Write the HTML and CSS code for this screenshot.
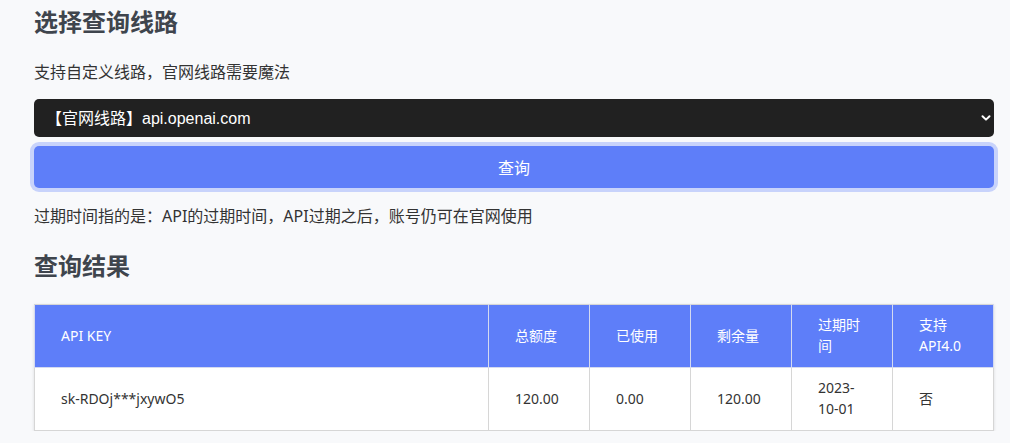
FILE: index.html
```html
<!DOCTYPE html>
<html lang="zh-CN">
<head>
    <meta charset="UTF-8">
    <meta name="viewport" content="width=device-width, initial-scale=1.0">
    <title>API KEY 余额查询</title>
    <link rel="stylesheet" href="styles.css">
</head>
<body>

    <div class="container">
        <h2 class="title">选择查询线路</h2>
        <p class="tip">支持自定义线路，官网线路需要魔法</p>

        <!-- 线路选择 -->
        <div class="select-wrap">
            <select id="api-line" class="line-select">
                <option value="https://api.openai.com">【官网线路】api.openai.com</option>
                <option value="custom">【自定义线路】</option>
            </select>
            <svg class="select-arrow" width="10" height="8" viewBox="0 0 10 8">
                <path d="M1.5 2.2 L5 5.6 L8.5 2.2" fill="none" stroke="#fff" stroke-width="2" stroke-linecap="round" stroke-linejoin="round"/>
            </svg>
        </div>

        <button id="query-button" class="query-btn">查询</button>

        <p class="tip">过期时间指的是：API的过期时间，API过期之后，账号仍可在官网使用</p>

        <h2 class="title">查询结果</h2>

        <!-- 结果表格 -->
        <table class="result-table">
            <colgroup>
                <col>
                <col class="num-col">
                <col class="num-col">
                <col class="num-col">
                <col class="num-col">
                <col class="num-col">
            </colgroup>
            <thead>
                <tr>
                    <th>API KEY</th>
                    <th>总额度</th>
                    <th>已使用</th>
                    <th>剩余量</th>
                    <th>过期时间</th>
                    <th>支持API4.0</th>
                </tr>
            </thead>
            <tbody id="result-body">
                <tr>
                    <td>sk-RDOj***jxywO5</td>
                    <td>120.00</td>
                    <td>0.00</td>
                    <td>120.00</td>
                    <td>2023-10-01</td>
                    <td>否</td>
                </tr>
            </tbody>
        </table>
    </div>

</body>
</html>
```

FILE: styles.css
```css
/* 余额查询页面 */
body {
    margin: 0;
    background-color: #f8f9fb;
    font-family: "Noto Sans", "Noto Sans CJK SC", sans-serif;
    color: #333;
}

.container {
    width: 960px;
    margin-left: 34px;
    padding-top: 8px;
}

.title {
    margin: 0 0 24px;
    font-size: 24px;
    line-height: 28px;
    font-weight: bold;
    color: #3f454d;
}

.tip {
    margin: 0 0 15px;
    font-size: 16px;
    line-height: 24px;
    color: #333;
}

.container > .tip:nth-of-type(2) {
    margin-top: 16px;
    margin-bottom: 24px;
}

.select-wrap {
    position: relative;
}

.line-select {
    display: block;
    width: 100%;
    height: 38px;
    padding: 0 12px;
    border: none;
    border-radius: 5px;
    background-color: #212121;
    color: #fff;
    font-family: "Liberation Sans", "Noto Sans CJK SC", sans-serif;
    font-size: 16px;
    appearance: none;
    -webkit-appearance: none;
    outline: none;
}

.select-arrow {
    position: absolute;
    right: 3px;
    top: 15px;
}

.query-btn {
    display: block;
    width: 100%;
    height: 42px;
    margin-top: 9px;
    border: none;
    border-radius: 5px;
    background-color: #5e7ef9;
    box-shadow: 0 0 0 4px #c8d3fb;
    color: #fff;
    font-family: "Noto Sans CJK SC", sans-serif;
    font-size: 16px;
    cursor: pointer;
}

.result-table {
    width: 100%;
    table-layout: fixed;
    border-collapse: collapse;
    background-color: #fff;
    font-size: 14px;
    line-height: 21px;
    box-shadow: 0 1px 3px rgba(0, 0, 0, 0.12);
}

.num-col {
    width: 101px;
}

.result-table th,
.result-table td {
    padding: 9px 25px 11px 26px;
    border: 1px solid #d6d6d6;
    text-align: left;
    vertical-align: middle;
    height: 42px;
}

.result-table th {
    background-color: #5e7ef9;
    color: #fff;
    font-weight: normal;
    border-color: #d4daf0;
    border-top-color: #d6d6d6;
}

.result-table td {
    color: #333;
}
```
